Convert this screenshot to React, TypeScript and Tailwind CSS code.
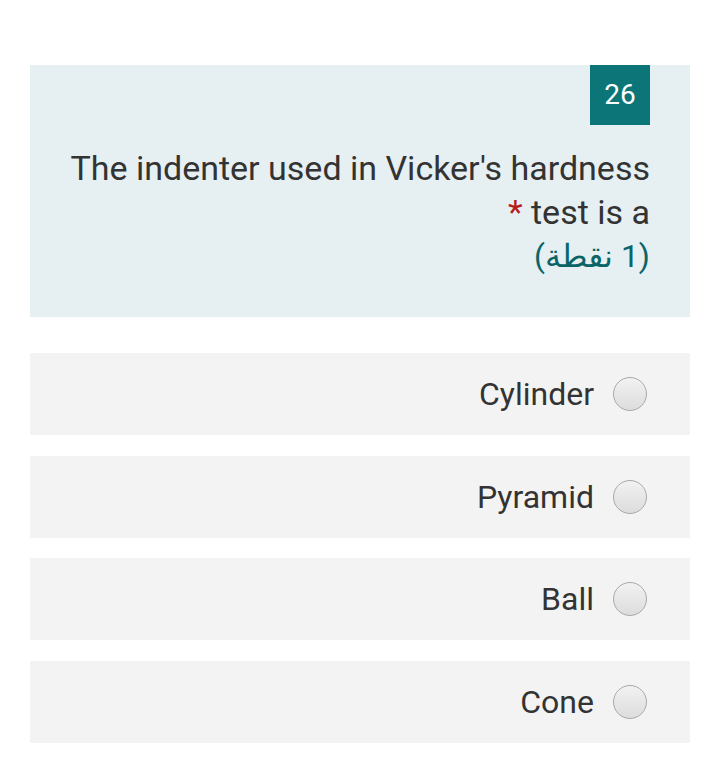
const OPTIONS = ["Cylinder", "Pyramid", "Ball", "Cone"];

function Radio() {
  return (
    <span className="block w-[34px] h-[34px] shrink-0 rounded-full border-[1.5px] border-[#a9a9a9] bg-gradient-to-b from-[#f2f2f2] to-[#dcdcdc]" />
  );
}

export default function App() {
  return (
    <div
      dir="rtl"
      className="min-h-[782px] bg-white pt-[65px] px-[30px]"
      style={{ fontFamily: "Roboto, 'Noto Sans', sans-serif" }}
    >
      {/* question */}
      <div className="bg-[#e6eff2] pr-[40px] pl-[30px] pb-[39px]">
        <div className="flex">
          <div className="w-[60px] h-[60px] bg-[#0b7578] text-white text-[28px] flex items-center justify-center">
            26
          </div>
        </div>
        <div className="mt-[21px] text-[34px] leading-[44px] text-[#333333]">
          <div>
            The indenter used in Vicker's hardness test is a <span className="text-[#b51c1c]">*</span>
          </div>
          <div className="text-[#0b6567] text-[32px]">(1 نقطة)</div>
        </div>
      </div>

      {/* options */}
      <div className="mt-[36px] flex flex-col gap-[20.5px]">
        {OPTIONS.map((o) => (
          <div key={o} className="h-[82px] bg-[#f3f3f3] flex items-center gap-[19px] pr-[43px]">
            <Radio />
            <span dir="ltr" className="text-[32px] text-[#333333]">{o}</span>
          </div>
        ))}
      </div>
    </div>
  );
}
